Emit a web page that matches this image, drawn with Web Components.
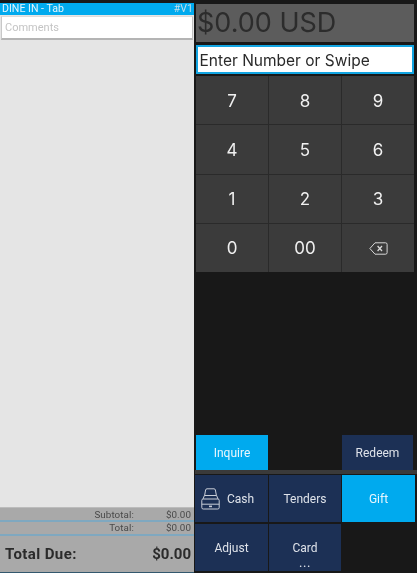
<!DOCTYPE html>
<html><head><meta charset="utf-8"><style>
html,body{margin:0;padding:0;background:#181818;}
body{width:417px;height:573px;overflow:hidden;font-family:Inter,"Liberation Sans",sans-serif;}
</style></head><body>
<pos-app>
  <order-pane slot="left"></order-pane>
  <pay-pane slot="right"></pay-pane>
</pos-app>
<script>
function def(name,html){
  customElements.define(name,class extends HTMLElement{
    connectedCallback(){
      if(this.shadowRoot)return;
      const r=this.attachShadow({mode:'open'});
      r.innerHTML=typeof html==='function'?html(this):html;
    }
  });
}
def('pos-app',`<style>
:host{display:grid;grid-template-columns:194px 223px;width:417px;height:573px;background:#181818;filter:blur(.35px);}
</style><slot name="left"></slot><slot name="right"></slot>`);

def('total-row',h=>`<style>
:host{display:flex;justify-content:flex-end;align-items:center;height:100%;font:9.8px Roboto,sans-serif;color:#4a4a4a;box-sizing:border-box;letter-spacing:.1px}
.v{width:60px;text-align:right;padding-right:3px;box-sizing:border-box}
</style><span>${h.getAttribute('label')}</span><span class="v">${h.getAttribute('value')}</span>`);

def('order-pane',`<style>
:host{display:flex;flex-direction:column;height:573px;padding-top:2.5px;box-sizing:border-box;background:#181818;}
.head{height:12px;background:#00aaee;color:#e4f4fc;font:10.6px/12.5px Roboto,sans-serif;display:flex;justify-content:space-between;padding:0 1px 0 2px;}
.cwrap{background:#e5e5e5;padding:1px 1px 0 1px;}
.comments{height:24px;box-sizing:border-box;background:#fff;border:1px solid #dcdcdc;border-bottom:2px solid #b4b4b4;border-left-color:#c8c8c8;border-right-color:#c0c0c0;color:#c4c4c4;font:11px/21px Roboto,sans-serif;padding-left:3px;}
.body{flex:1;background:#e5e5e5;}
.totals{height:64px;background:#a9a9a9;display:grid;grid-template-rows:12px 1.5px 12.5px 1.5px 1fr;border-top:1px solid #bcbcbc;border-bottom:1px solid #33586e;}
.sep{background:#7fa8c0;}
.due{display:flex;justify-content:space-between;align-items:center;font:700 15px Roboto,sans-serif;color:#2b2b2b;padding:0 3px 0 5px;}
.due span:first-child{letter-spacing:.4px}
</style>
<div class="head"><span>DINE IN - Tab</span><span style="color:#c5dfe9">#V1</span></div>
<div class="cwrap"><div class="comments">Comments</div></div>
<div class="body"></div>
<div class="totals">
  <total-row label="Subtotal:" value="$0.00"></total-row><div class="sep"></div>
  <total-row label="Total:" value="$0.00"></total-row><div class="sep"></div>
  <div class="due"><span>Total Due:</span><span>$0.00</span></div>
</div>`);

def('key-btn',`<style>
:host{display:flex;align-items:center;justify-content:center;background:#3b3b3b;color:#f0f0f0;font-size:17px;padding-top:1px;box-sizing:border-box;}
</style><slot></slot>`);

def('act-btn',h=>`<style>
:host{display:flex;align-items:center;justify-content:center;position:relative;background:${h.hasAttribute('on')?'#00aaee':'#1c3055'};color:#dfe3ea;font:12px Roboto,sans-serif;}
:host([on]){color:#e8f6fd}
.dots{position:absolute;left:0;right:0;bottom:3px;text-align:center;font-size:13px;line-height:10px;letter-spacing:.6px;}
</style><slot></slot>${h.hasAttribute('more')?'<span class="dots">...</span>':''}`);

def('pay-pane',`<style>
:host{display:flex;flex-direction:column;height:573px;box-sizing:border-box;padding:4px 0 2px 2px;background:#181818;}
.amt{height:38px;margin-right:3px;background:#5c5c5c;color:#2c2c2c;font-size:27px;line-height:38px;padding-left:1px;white-space:nowrap;}
.entry{height:29px;margin:3px 3px 0 0;box-sizing:border-box;background:#fff;border:2px solid #12a5e2;color:#2a2a2a;font-size:15.5px;line-height:27px;padding-left:1.5px;white-space:nowrap;}
.pad{margin:2px 3px 0 0;display:grid;grid-template-columns:72px 72px 72px;grid-template-rows:repeat(4,48.25px);gap:1px;background:#2a2a2a;height:196px;}
.spacer{flex:1}
.row{display:grid;grid-template-columns:72px 72px 71px;column-gap:1px;height:35px;margin-right:4px;}
.div{height:4px;margin:0 0 1px -1px;background:#3a3a3a;}
.tend{display:grid;grid-template-columns:73px 72px 73px;grid-template-rows:47px 47px;gap:2px 1px;margin-left:-1px;margin-right:2px;}
.blank{background:transparent}
.cash{display:flex;align-items:center;gap:7px;margin-left:-8px}
svg{display:block}
</style>
<div class="amt">$0.00 USD</div>
<div class="entry">Enter Number or Swipe</div>
<div class="pad">
<key-btn>7</key-btn><key-btn>8</key-btn><key-btn>9</key-btn>
<key-btn>4</key-btn><key-btn>5</key-btn><key-btn>6</key-btn>
<key-btn>1</key-btn><key-btn>2</key-btn><key-btn>3</key-btn>
<key-btn>0</key-btn><key-btn>00</key-btn>
<key-btn><svg width="19" height="13" viewBox="0 0 19 13" fill="none" stroke="#d8d8d8" stroke-width="1"><path d="M6 .8H16.5a1.6 1.6 0 0 1 1.6 1.6v8.2a1.6 1.6 0 0 1-1.6 1.6H6L.9 6.5Z"/><path d="M8.6 4 13 9M13 4 8.6 9" stroke-width="1.3"/></svg></key-btn>
</div>
<div class="spacer"></div>
<div class="row"><act-btn on>Inquire</act-btn><div class="blank"></div><act-btn>Redeem</act-btn></div>
<div class="div"></div>
<div class="tend">
<act-btn><span class="cash"><svg width="19" height="22" viewBox="0 0 19 22" fill="none" stroke="#c9ced8" stroke-width="1"><path d="M3.6 7.5 4.6 2A1.5 1.5 0 0 1 6 .8H13A1.5 1.5 0 0 1 14.4 2L15.4 7.5"/><path d="M2 11 3.4 7.5H15.6L17 11"/><rect x=".8" y="11" width="17.4" height="10" rx="1.4"/><path d="M.8 16.2H18.2"/><rect x="8" y="17.6" width="3" height="1.6" fill="#c9ced8" stroke="none"/></svg><span>Cash</span></span></act-btn>
<act-btn>Tenders</act-btn><act-btn on>Gift</act-btn>
<act-btn>Adjust</act-btn><act-btn more>Card</act-btn><div class="blank"></div>
</div>`);
</script>
</body></html>
